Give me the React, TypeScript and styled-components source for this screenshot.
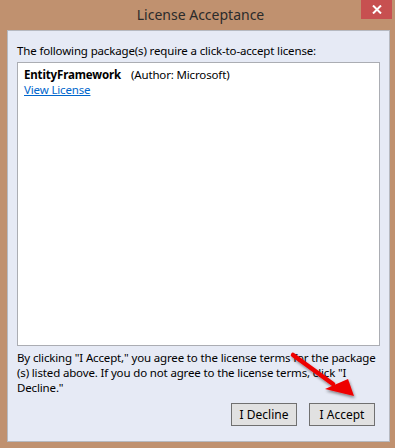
import * as React from 'react';
import styled, { createGlobalStyle } from 'styled-components';

const GlobalStyle = createGlobalStyle`
    html, body {
        margin: 0;
        padding: 0;
        background: #c0916f;
    }
`

const font = `"Segoe UI", "Noto Sans", "Open Sans", sans-serif`;

export default function App() {
    return (
        <>
            <GlobalStyle />
            <Window>
                <TitleBar>
                    <span />
                    <Title>License Acceptance</Title>
                    <CloseButton aria-label="Close">
                        <svg width="10" height="9" viewBox="0 0 10 9">
                            <path d="M1 0.5 L9 8.5 M9 0.5 L1 8.5" stroke="#fff" strokeWidth="2" />
                        </svg>
                    </CloseButton>
                </TitleBar>
                <Client>
                    <Intro>The following package(s) require a click-to-accept license:</Intro>
                    <PackageList>
                        <PackageRow>
                            <b>EntityFramework</b>
                            <Author>(Author: Microsoft)</Author>
                        </PackageRow>
                        <LicenseLink href="#">View License</LicenseLink>
                    </PackageList>
                    <Terms>
                        By clicking "I Accept," you agree to the license terms for the package<br />
                        (s) listed above. If you do not agree to the license terms, click "I<br />
                        Decline."
                    </Terms>
                    <Buttons>
                        <Button>I Decline</Button>
                        <Button>I Accept</Button>
                    </Buttons>
                    <Arrow width="80" height="60" viewBox="0 0 80 60">
                        <defs>
                            <filter id="sh" x="-20%" y="-20%" width="150%" height="150%">
                                <feGaussianBlur in="SourceAlpha" stdDeviation="1.5" />
                                <feOffset dx="1" dy="2" result="b" />
                                <feComponentTransfer>
                                    <feFuncA type="linear" slope="0.45" />
                                </feComponentTransfer>
                                <feMerge>
                                    <feMergeNode />
                                    <feMergeNode in="SourceGraphic" />
                                </feMerge>
                            </filter>
                        </defs>
                        <g filter="url(#sh)">
                            <path d="M8 9 L48 38" stroke="#ee0000" strokeWidth="4.5" strokeLinecap="round" />
                            <path d="M40 43 L63 33 L69 50 Z" fill="#ee0000" />
                        </g>
                    </Arrow>
                </Client>
            </Window>
        </>
    );
}

const Window = styled.div`
    width: 395px;
    height: 448px;
    background: #c0916f;
    display: flex;
    flex-direction: column;
    box-sizing: border-box;
    padding: 0 5px 6px 7px;
    font-family: ${font};
`

const TitleBar = styled.div`
    height: 30px;
    display: grid;
    grid-template-columns: 1fr auto 1fr;
    margin-right: -2px;
`

const Title = styled.div`
    font-size: 14px;
    color: #2b2b2b;
    line-height: 30px;
    margin-left: 2px;
`

const CloseButton = styled.button`
    justify-self: end;
    align-self: start;
    width: 31px;
    height: 19px;
    border: none;
    padding: 0;
    margin: 0;
    background: #c75050;
    display: flex;
    align-items: center;
    justify-content: center;
`

const Client = styled.div`
    position: relative;
    flex: 1;
    background: #e6eaf5;
    border: 1px solid #b6b9c0;
    box-sizing: border-box;
    padding: 12px 9px 15px 9px;
    display: flex;
    flex-direction: column;
    font-size: 11.5px;
    letter-spacing: -0.15px;
    line-height: 15px;
    color: #000;
`

const Intro = styled.div`
    margin-bottom: 4px;
`

const PackageList = styled.div`
    flex: 1;
    background: #fff;
    border: 1px solid #abadb3;
    padding: 4px 6px;
    display: flex;
    flex-direction: column;
`

const PackageRow = styled.div`
    display: flex;
    gap: 10px;

    b {
        font-weight: 700;
    }
`

const Author = styled.span``

const LicenseLink = styled.a`
    color: #0066cc;
    text-decoration: underline;
    align-self: flex-start;
`

const Terms = styled.div`
    margin-top: 4px;
    white-space: nowrap;
`

const Buttons = styled.div`
    display: flex;
    justify-content: flex-end;
    gap: 12px;
    margin-top: 8px;
    margin-right: 5px;
`

const Button = styled.button`
    width: 66px;
    height: 23px;
    background: #e1e1e1;
    border: 1px solid #707070;
    font-family: ${font};
    font-size: 12px;
    color: #000;
    padding: 0;
`

const Arrow = styled.svg`
    position: absolute;
    left: 277px;
    top: 315px;
    pointer-events: none;
`
